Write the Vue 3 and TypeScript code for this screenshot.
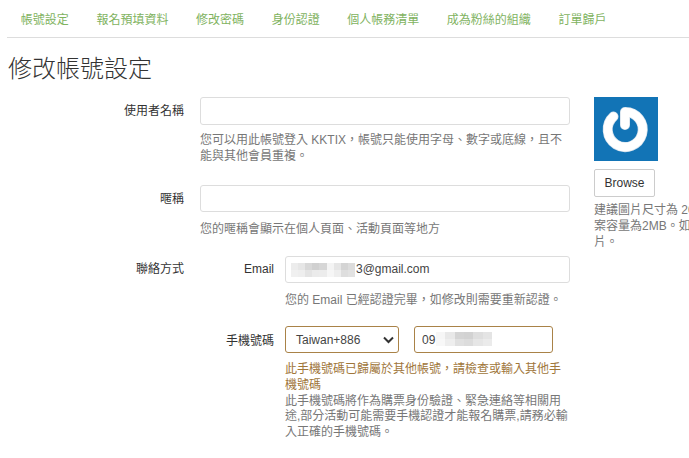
<script setup lang="ts">
const tabs: string[] = ['帳號設定', '報名預填資料', '修改密碼', '身份認證', '個人帳務清單', '成為粉絲的組織', '訂單歸戶']
const emailBlur: string[] = [
  '#ececec', '#e6e6e6', '#d8d8d8', '#d0d0d0', '#d6d6d6', '#f4f4f4', '#e6e6e6', '#d4d4d4', '#dcdcdc',
  '#f0f0f0', '#eeeeee', '#e4e4e4', '#ebebeb', '#ececec', '#f6f6f6', '#eeeeee', '#dedede', '#e2e2e2',
]
const phoneBlur: string[] = [
  '#f6f6f6', '#e8e8e8', '#d4d4d4', '#d2d2d2', '#dedede', '#e4e4e4',
  '#f8f8f8', '#eeeeee', '#e0e0e0', '#dcdcdc', '#e6e6e6', '#ebebeb',
]
</script>

<template>
  <div class="page">
    <nav class="tabs">
      <a v-for="t in tabs" :key="t" class="tab">{{ t }}</a>
    </nav>
    <h1 class="title">修改帳號設定</h1>
    <div class="layout">
      <form class="form" @submit.prevent>
        <div class="row">
          <label class="label">使用者名稱</label>
          <div class="field">
            <input class="input" type="text" />
            <p class="help help-first">您可以用此帳號登入 KKTIX，帳號只能使用字母、數字或底線，且不能與其他會員重複。</p>
          </div>
        </div>
        <div class="row row-nick">
          <label class="label">暱稱</label>
          <div class="field">
            <input class="input input-nick" type="text" />
            <p class="help help-nick">您的暱稱會顯示在個人頁面、活動頁面等地方</p>
          </div>
        </div>
        <div class="row row-contact">
          <label class="label label-contact">聯絡方式</label>
          <div class="field">
            <div class="sub">
              <label class="sublabel">Email</label>
              <div class="masked">
                <input class="input input-email" type="text" value="3@gmail.com" />
                <div class="mosaic mosaic-email">
                  <i v-for="(c, i) in emailBlur" :key="i" :style="{ background: c }"></i>
                </div>
              </div>
            </div>
            <p class="help help-sub">您的 Email 已經認證完畢，如修改則需要重新認證。</p>
            <div class="sub sub-phone">
              <label class="sublabel">手機號碼</label>
              <div class="phone">
                <div class="select">
                  <span>Taiwan+886</span>
                  <svg width="11" height="8" viewBox="0 0 11 8"><path d="M1 1.5 5.5 6 10 1.5" fill="none" stroke="#333" stroke-width="2"/></svg>
                </div>
                <div class="masked">
                  <input class="input input-phone" type="text" value="09" />
                  <div class="mosaic mosaic-phone">
                    <i v-for="(c, i) in phoneBlur" :key="i" :style="{ background: c }"></i>
                  </div>
                </div>
              </div>
            </div>
            <div class="help help-sub help-phone">
              <p class="error">此手機號碼已歸屬於其他帳號，請檢查或輸入其他手機號碼</p>
              <p>此手機號碼將作為購票身份驗證、緊急連絡等相關用途,部分活動可能需要手機認證才能報名購票,請務必輸入正確的手機號碼。</p>
            </div>
          </div>
        </div>
      </form>
      <aside class="side">
        <svg class="avatar" width="64" height="64" viewBox="0 0 64 64">
          <defs>
            <filter id="soft" x="-20%" y="-20%" width="140%" height="140%"><feGaussianBlur stdDeviation="0.7" /></filter>
          </defs>
          <rect width="64" height="64" fill="#1274b6" />
          <g fill="none" stroke-linecap="round">
            <path d="M31 15V28M31 15A17.5 17.5 0 1 1 19.5 19.5" stroke="#d6e2ec" stroke-width="10" />
            <path d="M31 15V28M31 15A17.5 17.5 0 1 1 19.5 19.5" stroke="#ffffff" stroke-width="8.5" filter="url(#soft)" />
          </g>
        </svg>
        <button class="browse" type="button">Browse</button>
        <p class="note">建議圖片尺寸為 200x200，檔案容量為2MB。如需上傳大圖片。</p>
      </aside>
    </div>
  </div>
</template>

<style>
html, body { margin: 0; background: #fff; overflow: hidden; }
</style>

<style scoped>
.page {
  width: 689px;
  height: 458px;
  overflow: hidden;
  box-sizing: border-box;
  padding-left: 7px;
  font-family: "Liberation Sans", "Noto Sans CJK TC", sans-serif;
  font-size: 12px;
  color: #333;
}
.tabs {
  display: flex;
  height: 37px;
  border-bottom: 1px solid #ddd;
}
.tab {
  padding: 0 13.8px;
  line-height: 41px;
  color: #7fb35f;
  white-space: nowrap;
}
.title {
  margin: 14px 0 0 1px;
  font-size: 24px;
  font-weight: 300;
  line-height: 34px;
  color: #333;
}
.layout {
  display: flex;
  margin-top: 11px;
  width: 760px;
}
.form { width: 563px; flex: none; }
.row { display: flex; }
.row-nick { margin-top: 21px; }
.row-contact { margin-top: 18px; }
.label {
  width: 177px;
  flex: none;
  text-align: right;
  line-height: 28px;
  color: #333;
}
.label-contact { line-height: 26px; }
.field { margin-left: 16px; width: 370px; }
.input {
  display: block;
  width: 100%;
  height: 28px;
  box-sizing: border-box;
  border: 1px solid #ddd;
  border-radius: 3px;
  padding: 0 5px;
  background: #fff;
  font: inherit;
  color: #444;
  outline: none;
}
.input-nick { height: 27px; }
.help {
  margin: 0;
  color: #777;
  line-height: 15.6px;
}
.help-first { margin-top: 8px; }
.help-nick { margin-top: 10px; }
.help p { margin: 0; }
.sub { display: flex; align-items: center; }
.sub-phone { margin-top: 18px; }
.sublabel {
  width: 74px;
  flex: none;
  text-align: right;
  margin-right: 11px;
  color: #333;
}
.masked { position: relative; }
.sub > .masked { flex: 1; }
.input-email { padding-left: 70px; height: 27px; }
.input-phone { width: 139px; height: 27px; border-color: #a98247; padding-left: 7px; }
.mosaic { position: absolute; display: grid; }
.mosaic i { display: block; }
.mosaic-email {
  left: 6px;
  top: 7px;
  width: 64px;
  height: 14px;
  grid-template-columns: repeat(9, 1fr);
  grid-template-rows: 1fr 1fr;
}
.mosaic-phone {
  left: 22px;
  top: 6px;
  width: 56px;
  height: 14px;
  grid-template-columns: repeat(6, 1fr);
  grid-template-rows: 1fr 1fr;
}
.phone { display: flex; gap: 15px; }
.select {
  width: 114px;
  height: 27px;
  box-sizing: border-box;
  display: flex;
  align-items: center;
  justify-content: space-between;
  padding: 0 4px 0 10px;
  border: 1px solid #a98247;
  border-radius: 3px;
  color: #444;
}
.help-sub { margin-left: 85px; margin-top: 10px; width: 285px; }
.help-phone { margin-top: 9px; }
.error { color: #a0763a; }
.side { margin-left: 24px; width: 165px; flex: none; }
.avatar { display: block; }
.browse {
  display: block;
  margin-top: 8px;
  width: 61px;
  height: 28px;
  padding: 0;
  background: #fff;
  border: 1px solid #ccc;
  border-radius: 2px;
  font: inherit;
  color: #333;
}
.note {
  margin: 5px 0 0;
  color: #777;
  line-height: 16px;
}
</style>
